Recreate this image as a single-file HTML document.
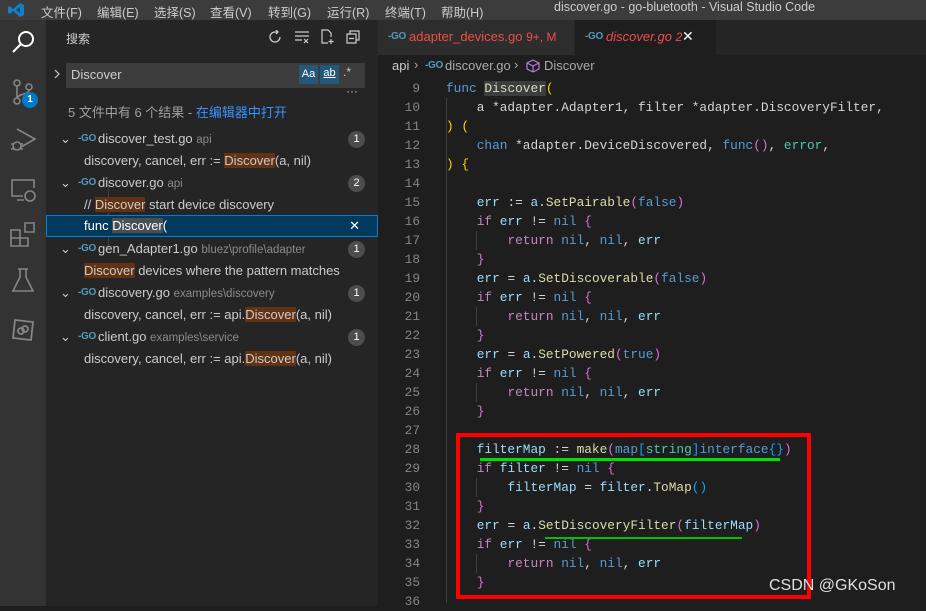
<!DOCTYPE html>
<html><head><meta charset="utf-8"><style>
*{margin:0;padding:0;box-sizing:border-box}
body{width:926px;height:606px;overflow:hidden;background:#1e1e1e;font-family:"Liberation Sans","Noto Sans CJK SC",sans-serif;color:#ccc;position:relative;font-size:13px}
.abs{position:absolute}
#title{left:0;top:0;width:926px;height:20px;background:#3c3c3c;font-size:12.5px;color:#ccc}
#title span{position:absolute;top:2px}
#act{left:0;top:20px;width:46px;height:586px;background:#333}
#side{left:46px;top:20px;width:332px;height:586px;background:#252526}
.row{position:absolute;left:0;width:332px;height:22px;line-height:22px;font-size:13px;white-space:nowrap}
.hl{background:#613214;}
.badge{position:absolute;right:13px;top:3px;width:17px;height:17px;border-radius:50%;background:#4d4d4d;color:#fff;font-size:11px;line-height:17px;text-align:center}
.go{color:#519aba;font-weight:bold;font-size:10px;letter-spacing:-.3px}
.dim{color:#8b8b8b;font-size:11.5px}
#tabs{left:378px;top:20px;width:548px;height:35px;background:#252526}
#crumb{left:378px;top:55px;width:548px;height:22px;font-size:13px}
.code{position:absolute;left:378px;font-family:"Liberation Mono",monospace;font-size:12.8px;white-space:pre;height:19px;line-height:19px;color:#d4d4d4}
.ln{position:absolute;left:378px;width:42px;text-align:right;font-family:"Liberation Mono",monospace;font-size:12.8px;color:#858585;height:19px;line-height:19px}
.k{color:#569cd6}.c{color:#c586c0}.f{color:#dcdcaa}.v{color:#9cdcfe}.t{color:#4ec9b0}.g{color:#ffd700}.p{color:#da70d6}.b{color:#179fff}
.guide{position:absolute;width:1px;background:#404040}
</style></head><body>
<div id="title" class="abs">
<svg class="abs" style="left:8px;top:3px" width="16" height="14" viewBox="0 0 16 14"><path d="M12 0L16 2V12L12 14L4 7L12 0ZM12 4L8 7L12 10Z M0 4L2 3L6 7L2 11L0 10Z" fill="#0f7fd1"/></svg>
<span style="left:41px">文件(F)</span><span style="left:97px">编辑(E)</span><span style="left:154px">选择(S)</span><span style="left:210px">查看(V)</span><span style="left:268px">转到(G)</span><span style="left:327px">运行(R)</span><span style="left:385px">终端(T)</span><span style="left:441px">帮助(H)</span>
<span style="left:554px;top:0">discover.go - go-bluetooth - Visual Studio Code</span>
</div>
<div id="act" class="abs">
<svg class="abs" style="left:11px;top:9px" width="26" height="26" viewBox="0 0 26 26" fill="none" stroke="#fff" stroke-width="2"><circle cx="15" cy="10" r="7"/><path d="M10 15L2 23"/></svg>
<svg class="abs" style="left:11px;top:58px" width="26" height="30" viewBox="0 0 26 30" fill="none" stroke="#858585" stroke-width="1.6"><circle cx="6" cy="5" r="3"/><circle cx="6" cy="23" r="3"/><circle cx="18" cy="9" r="3"/><path d="M6 8V20M18 12C18 17 8 15 6 20"/></svg>
<div class="abs" style="left:22px;top:72px;width:16px;height:16px;border-radius:50%;background:#007acc;color:#fff;font-size:10px;font-weight:bold;text-align:center;line-height:16px">1</div>
<svg class="abs" style="left:9px;top:106px" width="28" height="28" viewBox="0 0 28 28" fill="none" stroke="#858585" stroke-width="1.6"><path d="M8 3L26 13L12 21"/><circle cx="8" cy="20" r="4"/><path d="M2 18H5M2 23H5M11 18H14M11 23H14"/></svg>
<svg class="abs" style="left:9px;top:156px" width="28" height="28" viewBox="0 0 28 28" fill="none" stroke="#858585" stroke-width="1.6"><path d="M14 20H3V4H25V12M8 24H15"/><circle cx="21" cy="20" r="5"/></svg>
<svg class="abs" style="left:9px;top:200px" width="28" height="28" viewBox="0 0 28 28" fill="none" stroke="#858585" stroke-width="1.6"><path d="M2 10H11V26H2ZM2 18H19V26H11M16 3H25V12H16Z"/></svg>
<svg class="abs" style="left:10px;top:246px" width="26" height="28" viewBox="0 0 26 28" fill="none" stroke="#858585" stroke-width="1.6"><path d="M8 3H18M10 3V11L3 25H23L16 11V3"/></svg>
<svg class="abs" style="left:9px;top:296px" width="28" height="28" viewBox="0 0 28 28" fill="none" stroke="#858585" stroke-width="1.8"><path d="M6 4L24 6L22 24L4 22Z"/><circle cx="12" cy="15" r="3"/><circle cx="16" cy="13" r="3"/></svg>
</div>
<div id="side" class="abs">
<div class="abs" style="left:20px;top:10px;font-size:12px">搜索</div>
<svg class="abs" style="left:222px;top:10px" width="14" height="14" viewBox="0 0 14 14" fill="none" stroke="#ccc" stroke-width="1.3"><path d="M12 7A5 5 0 1 1 7 2H10M8 0L10 2L8 4"/></svg>
<svg class="abs" style="left:248px;top:10px" width="16" height="14" viewBox="0 0 16 14" fill="none" stroke="#ccc" stroke-width="1.2"><path d="M1 2H15M1 6H15M1 10H8M10 9L14 13M14 9L10 13"/></svg>
<svg class="abs" style="left:274px;top:9px" width="16" height="16" viewBox="0 0 16 16" fill="none" stroke="#ccc" stroke-width="1.2"><path d="M8 14H2V1H8L11 4V8M11 10V15M8.5 12.5H13.5"/></svg>
<svg class="abs" style="left:300px;top:10px" width="14" height="14" viewBox="0 0 14 14" fill="none" stroke="#ccc" stroke-width="1.2"><path d="M1 4H10V13H1ZM4 4V1H13V10H10M3 8.5H8"/></svg>
<svg class="abs" style="left:7px;top:49px" width="8" height="10" viewBox="0 0 8 10" fill="none" stroke="#ccc" stroke-width="1.2"><path d="M2 1L6 5L2 9"/></svg>
<div class="abs" style="left:20px;top:43px;width:299px;height:25px;background:#3c3c3c"></div>
<div class="abs" style="left:25px;top:47px;font-size:13px;color:#ccc">Discover</div>
<div class="abs" style="left:253px;top:45px;width:19px;height:19px;background:#24587a;color:#fff;font-size:11px;text-align:center;line-height:19px">Aa</div>
<div class="abs" style="left:274px;top:45px;width:19px;height:19px;background:#24587a;color:#fff;font-size:11px;text-align:center;line-height:17px;text-decoration:underline">ab</div>
<div class="abs" style="left:297px;top:45px;color:#ccc;font-size:12px">.*</div>
<div class="abs" style="left:300px;top:64px;color:#ccc;font-size:12px">···</div>
<div class="abs" style="left:22px;top:82px;font-size:13px;color:#a0a0a0">5 文件中有 6 个结果 - <span style="color:#3794ff">在编辑器中打开</span></div>
<div class="guide" style="left:62px;top:163px;height:66px"></div>
<div class="row" style="top:108px"><span style="position:absolute;left:14px;color:#ccc">⌄</span><span class="go" style="position:absolute;left:32px">-GO</span><span style="position:absolute;left:52px">discover_test.go <span class="dim">api</span></span><div class="badge">1</div></div>
<div class="row" style="top:130px"><span style="position:absolute;left:38px">discovery, cancel, err := <span class="hl">Discover</span>(a, nil)</span></div>
<div class="row" style="top:152px"><span style="position:absolute;left:14px">⌄</span><span class="go" style="position:absolute;left:32px">-GO</span><span style="position:absolute;left:52px">discover.go <span class="dim">api</span></span><div class="badge">2</div></div>
<div class="row" style="top:174px"><span style="position:absolute;left:38px">// <span class="hl">Discover</span> start device discovery</span></div>
<div class="row" style="top:195px;background:#04395e;outline:1px solid #007fd4;outline-offset:-1px"><span style="position:absolute;left:38px;color:#fff">func <span style="background:#4b4f52">Discover</span>(</span><span style="position:absolute;right:18px;color:#fff">✕</span></div>
<div class="row" style="top:218px"><span style="position:absolute;left:14px">⌄</span><span class="go" style="position:absolute;left:32px">-GO</span><span style="position:absolute;left:52px">gen_Adapter1.go <span class="dim">bluez\profile\adapter</span></span><div class="badge">1</div></div>
<div class="row" style="top:240px"><span style="position:absolute;left:38px"><span class="hl">Discover</span> devices where the pattern matches</span></div>
<div class="row" style="top:262px"><span style="position:absolute;left:14px">⌄</span><span class="go" style="position:absolute;left:32px">-GO</span><span style="position:absolute;left:52px">discovery.go <span class="dim">examples\discovery</span></span><div class="badge">1</div></div>
<div class="row" style="top:284px"><span style="position:absolute;left:38px">discovery, cancel, err := api.<span class="hl">Discover</span>(a, nil)</span></div>
<div class="row" style="top:306px"><span style="position:absolute;left:14px">⌄</span><span class="go" style="position:absolute;left:32px">-GO</span><span style="position:absolute;left:52px">client.go <span class="dim">examples\service</span></span><div class="badge">1</div></div>
<div class="row" style="top:328px"><span style="position:absolute;left:38px">discovery, cancel, err := api.<span class="hl">Discover</span>(a, nil)</span></div>
</div>
<div id="tabs" class="abs">
<div class="abs" style="left:0;top:0;width:196px;height:35px;background:#2d2d2d"></div>
<span class="go abs" style="left:10px;top:11px">-GO</span>
<div class="abs" style="left:31px;top:9px;color:#f14c4c;font-size:13px">adapter_devices.go <span style="font-size:12px">9+, M</span></div>
<div class="abs" style="left:197px;top:0;width:141px;height:35px;background:#1e1e1e"></div>
<span class="go abs" style="left:207px;top:11px">-GO</span>
<div class="abs" style="left:228px;top:9px;color:#f14c4c;font-size:13px;font-style:italic">discover.go <span style="font-size:12px">2</span></div>
<div class="abs" style="left:304px;top:8px;color:#fff;font-size:14px">✕</div>
</div>
<div id="crumb" class="abs">
<span class="abs" style="left:14px;top:3px;color:#ccc">api</span><span class="abs" style="left:36px;top:2px;color:#aaa">›</span>
<span class="go abs" style="left:47px;top:5px">-GO</span><span class="abs" style="left:67px;top:3px;color:#aaa">discover.go</span><span class="abs" style="left:136px;top:2px;color:#aaa">›</span>
<svg class="abs" style="left:148px;top:4px" width="14" height="14" viewBox="0 0 14 14" fill="none" stroke="#b180d7" stroke-width="1.2"><path d="M7 1L13 4V10L7 13L1 10V4ZM1 4L7 7L13 4M7 7V13"/></svg>
<span class="abs" style="left:166px;top:3px;color:#aaa">Discover</span>
</div>
<div class="guide" style="left:446px;top:98px;height:505px"></div>
<div class="guide" style="left:476px;top:231px;height:19px"></div>
<div class="guide" style="left:476px;top:307px;height:19px"></div>
<div class="guide" style="left:476px;top:383px;height:19px"></div>
<div class="guide" style="left:476px;top:478px;height:19px"></div>
<div class="guide" style="left:476px;top:554px;height:19px"></div>
<div class="ln" style="top:79px">9</div><div class="code" style="left:446px;top:79px"><span class="k">func</span> <span class="f" style="background:#3a3d41">Discover</span><span class="g">(</span></div>
<div class="ln" style="top:98px">10</div><div class="code" style="left:446px;top:98px">    a *adapter.Adapter1, filter *adapter.Discovery<span>Filter</span>,</div>
<div class="ln" style="top:117px">11</div><div class="code" style="left:446px;top:117px"><span class="g">)</span> <span class="g">(</span></div>
<div class="ln" style="top:136px">12</div><div class="code" style="left:446px;top:136px">    <span class="k">chan</span> *adapter.DeviceDiscovered, <span class="k">func</span><span class="p">()</span>, <span class="t">error</span>,</div>
<div class="ln" style="top:155px">13</div><div class="code" style="left:446px;top:155px"><span class="g">)</span> <span class="g">{</span></div>
<div class="ln" style="top:174px">14</div>
<div class="ln" style="top:193px">15</div><div class="code" style="left:446px;top:193px">    <span class="v">err</span> := <span class="v">a</span>.<span class="f">SetPairable</span><span class="p">(</span><span class="k">false</span><span class="p">)</span></div>
<div class="ln" style="top:212px">16</div><div class="code" style="left:446px;top:212px">    <span class="c">if</span> <span class="v">err</span> != <span class="k">nil</span> <span class="p">{</span></div>
<div class="ln" style="top:231px">17</div><div class="code" style="left:446px;top:231px">        <span class="c">return</span> <span class="k">nil</span>, <span class="k">nil</span>, <span class="v">err</span></div>
<div class="ln" style="top:250px">18</div><div class="code" style="left:446px;top:250px">    <span class="p">}</span></div>
<div class="ln" style="top:269px">19</div><div class="code" style="left:446px;top:269px">    <span class="v">err</span> = <span class="v">a</span>.<span class="f">SetDiscoverable</span><span class="p">(</span><span class="k">false</span><span class="p">)</span></div>
<div class="ln" style="top:288px">20</div><div class="code" style="left:446px;top:288px">    <span class="c">if</span> <span class="v">err</span> != <span class="k">nil</span> <span class="p">{</span></div>
<div class="ln" style="top:307px">21</div><div class="code" style="left:446px;top:307px">        <span class="c">return</span> <span class="k">nil</span>, <span class="k">nil</span>, <span class="v">err</span></div>
<div class="ln" style="top:326px">22</div><div class="code" style="left:446px;top:326px">    <span class="p">}</span></div>
<div class="ln" style="top:345px">23</div><div class="code" style="left:446px;top:345px">    <span class="v">err</span> = <span class="v">a</span>.<span class="f">SetPowered</span><span class="p">(</span><span class="k">true</span><span class="p">)</span></div>
<div class="ln" style="top:364px">24</div><div class="code" style="left:446px;top:364px">    <span class="c">if</span> <span class="v">err</span> != <span class="k">nil</span> <span class="p">{</span></div>
<div class="ln" style="top:383px">25</div><div class="code" style="left:446px;top:383px">        <span class="c">return</span> <span class="k">nil</span>, <span class="k">nil</span>, <span class="v">err</span></div>
<div class="ln" style="top:402px">26</div><div class="code" style="left:446px;top:402px">    <span class="p">}</span></div>
<div class="ln" style="top:421px">27</div>
<div class="ln" style="top:440px">28</div><div class="code" style="left:446px;top:440px">    <span class="v">filterMap</span> := <span class="f">make</span><span class="p">(</span><span class="k">map</span><span class="b">[</span><span class="t">string</span><span class="b">]</span><span class="k">interface</span><span class="b">{}</span><span class="p">)</span></div>
<div class="ln" style="top:459px">29</div><div class="code" style="left:446px;top:459px">    <span class="c">if</span> <span class="v">filter</span> != <span class="k">nil</span> <span class="p">{</span></div>
<div class="ln" style="top:478px">30</div><div class="code" style="left:446px;top:478px">        <span class="v">filterMap</span> = <span class="v">filter</span>.<span class="f">ToMap</span><span class="b">()</span></div>
<div class="ln" style="top:497px">31</div><div class="code" style="left:446px;top:497px">    <span class="p">}</span></div>
<div class="ln" style="top:516px">32</div><div class="code" style="left:446px;top:516px">    <span class="v">err</span> = <span class="v">a</span>.<span class="f">SetDiscoveryFilter</span><span class="p">(</span><span class="v">filterMap</span><span class="p">)</span></div>
<div class="ln" style="top:535px">33</div><div class="code" style="left:446px;top:535px">    <span class="c">if</span> <span class="v">err</span> != <span class="k">nil</span> <span class="p">{</span></div>
<div class="ln" style="top:554px">34</div><div class="code" style="left:446px;top:554px">        <span class="c">return</span> <span class="k">nil</span>, <span class="k">nil</span>, <span class="v">err</span></div>
<div class="ln" style="top:573px">35</div><div class="code" style="left:446px;top:573px">    <span class="p">}</span></div>
<div class="ln" style="top:592px">36</div>
<div class="abs" style="left:456px;top:433px;width:355px;height:166px;border:4px solid #ff0000"></div>
<div class="abs" style="left:480px;top:458px;width:300px;height:3px;background:#00e000"></div>
<div class="abs" style="left:545px;top:537px;width:197px;height:2px;background:#00c000"></div>
<div class="abs" style="left:769px;top:577px;font-size:16px;color:#e0e0e0;font-family:'Liberation Sans',sans-serif">CSDN @GKoSon</div>
</body></html>
